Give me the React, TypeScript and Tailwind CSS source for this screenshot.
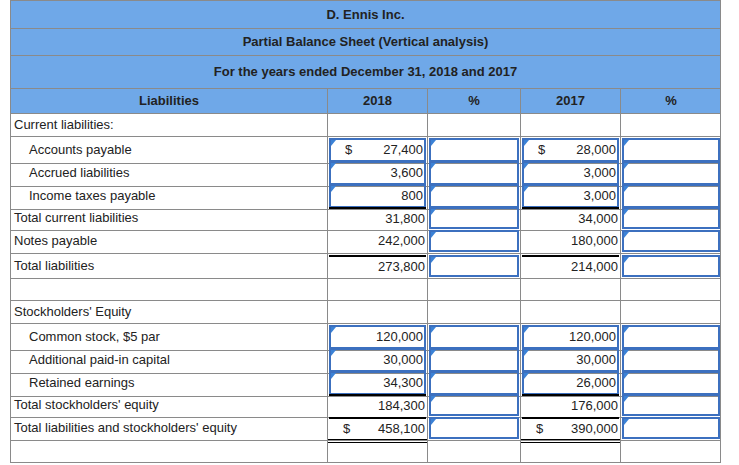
import React from "react";

type V = { v?: string; d?: boolean; input?: boolean; top?: boolean; dbl?: boolean };
type Row = { label?: string; indent?: boolean; h?: number; a?: V; b?: V; c?: V; d?: V };

const Tri = () => (
  <div className="absolute left-0 top-0 w-0 h-0 border-t-[6px] border-t-[#3b82d6] border-r-[5px] border-r-transparent" />
);

function Cell({ c, last }: { c?: V; last?: boolean }) {
  const border = `border-b border-[#8a8a8a] ${last ? "" : "border-r"}`;
  if (!c) return <div className={border} />;
  return (
    <div className={`${border} relative p-px`}>
      <div
        className={`relative h-full flex items-center justify-between pl-[6px] pr-[1px] ${
          c.input ? "border-2 border-[#3c70bf]" : ""
        } ${c.top ? "border-t-2 border-t-black" : ""}`}
      >
        {c.input && <Tri />}
        <span className="pl-[8px]">{c.d ? "$" : ""}</span>
        <span>{c.v}</span>
      </div>
      {c.dbl && (
        <div className="absolute left-0 right-0 bottom-[-3px] h-[4px] border-t border-b border-black z-10" />
      )}
    </div>
  );
}

const I: V = { input: true };
const rows: Row[] = [
  { label: "Current liabilities:" },
  { label: "Accounts payable", indent: true, a: { v: "27,400", d: true, input: true }, b: I, c: { v: "28,000", d: true, input: true }, d: I },
  { label: "Accrued liabilities", indent: true, a: { v: "3,600", input: true }, b: I, c: { v: "3,000", input: true }, d: I },
  { label: "Income taxes payable", indent: true, a: { v: "800", input: true }, b: I, c: { v: "3,000", input: true }, d: I },
  { label: "Total current liabilities", a: { v: "31,800", top: true }, b: I, c: { v: "34,000", top: true }, d: I },
  { label: "Notes payable", h: 25, a: { v: "242,000" }, b: I, c: { v: "180,000" }, d: I },
  { label: "Total liabilities", h: 24, a: { v: "273,800", top: true }, b: I, c: { v: "214,000", top: true }, d: I },
  { h: 23, a: {}, b: {}, c: {}, d: {} },
  { label: "Stockholders' Equity", a: {}, b: {}, c: {}, d: {} },
  { label: "Common stock, $5 par", indent: true, a: { v: "120,000", input: true }, b: I, c: { v: "120,000", input: true }, d: I },
  { label: "Additional paid-in capital", indent: true, a: { v: "30,000", input: true }, b: I, c: { v: "30,000", input: true }, d: I },
  { label: "Retained earnings", indent: true, a: { v: "34,300", input: true }, b: I, c: { v: "26,000", input: true }, d: I },
  { label: "Total stockholders' equity", a: { v: "184,300", top: true }, b: I, c: { v: "176,000", top: true }, d: I },
  { label: "Total liabilities and stockholders' equity", a: { v: "458,100", d: true, top: true, dbl: true }, b: I, c: { v: "390,000", d: true, top: true, dbl: true }, d: I },
  { h: 24, a: {}, b: {}, c: {}, d: {} },
];

export default function App() {
  const grid = "grid grid-cols-[317px_100px_93px_100px_100px]";
  return (
    <div className="w-[739px] h-[465px] bg-white text-[13px] text-[#222]" style={{ fontFamily: '"Liberation Sans", Arial, sans-serif' }}>
      <div className="ml-[10px] w-[711px] border-l border-t border-r border-[#8a8a8a]">
        <div className="bg-[#6fa8e8] font-bold">
          <div className="h-[28px] flex items-center justify-center border-b border-[#8a8a8a]">D. Ennis Inc.</div>
          <div className="h-[27px] flex items-center justify-center border-b border-[#8a8a8a]">Partial Balance Sheet (Vertical analysis)</div>
          <div className="h-[33px] flex items-center justify-center border-b border-[#8a8a8a]">For the years ended December 31, 2018 and 2017</div>
          <div className={`${grid} h-[25px]`}>
            {["Liabilities", "2018", "%", "2017", "%"].map((t, i) => (
              <div key={i} className={`flex items-center justify-center border-b border-[#8a8a8a] ${i < 4 ? "border-r" : ""}`}>{t}</div>
            ))}
          </div>
        </div>
        {rows.map((r, i) => (
          <div key={i} className={grid} style={{ height: r.h ?? 23 }}>
            <div className={`flex items-center border-b border-r border-[#8a8a8a] ${r.indent ? "pl-[18px]" : "pl-[3px]"}`}>{r.label}</div>
            <Cell c={r.a ?? {}} />
            <Cell c={r.b ?? {}} />
            <Cell c={r.c ?? {}} />
            <Cell c={r.d ?? {}} last />
          </div>
        ))}
      </div>
    </div>
  );
}
